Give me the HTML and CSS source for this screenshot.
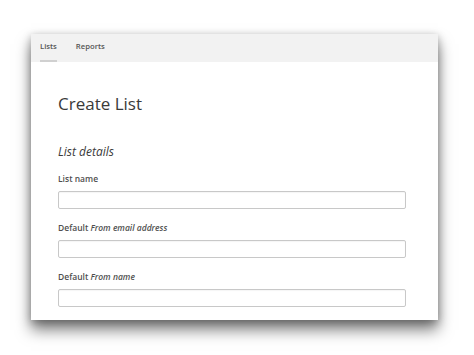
FILE: index.html
```html
<!DOCTYPE html>
<html>
<head>
<meta charset="utf-8">
<link rel="stylesheet" href="styles.css">
</head>
<body>
<div class="card">
  <nav class="tabs">
    <span class="tab active">Lists</span>
    <span class="tab">Reports</span>
  </nav>
  <main class="content">
    <h1 class="title">Create List</h1>
    <h2 class="section">List details</h2>
    <div class="field">
      <label class="label">List name</label>
      <div class="input"></div>
    </div>
    <div class="field">
      <label class="label">Default <em>From email address</em></label>
      <div class="input"></div>
    </div>
    <div class="field">
      <label class="label">Default <em>From name</em></label>
      <div class="input"></div>
    </div>
  </main>
</div>
</body>
</html>
```
FILE: styles.css
```css
html, body {
  margin: 0;
  padding: 0;
  background: #fff;
}
body {
  font-family: "Open Sans", "Noto Sans", sans-serif;
  color: #444;
  padding: 34px 0 0 31px;
  min-height: 355px;
  box-sizing: border-box;
}
.card {
  width: 407px;
  background: #fff;
  box-shadow: 0 10px 14px rgba(0,0,0,0.5), 0 2px 8px rgba(0,0,0,0.28);
}
.tabs {
  height: 28px;
  background: #f2f2f2;
  display: flex;
  gap: 19px;
  padding-left: 9px;
  box-sizing: border-box;
}
.tab {
  font-size: 7.7px;
  font-weight: 600;
  color: #555;
  line-height: 12px;
  padding-top: 6px;
  height: 28px;
  box-sizing: border-box;
}
.tab.active {
  border-bottom: 2px solid #d0d0d0;
}
.content {
  padding: 28px 32px 13px 27px;
}
.title {
  margin: 0;
  font-size: 17px;
  font-weight: 400;
  line-height: 28px;
  color: #3a3a3a;
}
.section {
  margin: 24px 0 10px;
  font-size: 12px;
  font-weight: 400;
  font-style: italic;
  line-height: 20px;
  color: #3a3a3a;
}
.field {
  display: flex;
  flex-direction: column;
  gap: 5px;
}
.field + .field {
  margin-top: 12px;
}
.label {
  font-size: 8.5px;
  font-weight: 600;
  line-height: 14px;
  color: #4f4f4f;
}
.label em {
  font-weight: 600;
}
.input {
  height: 18px;
  box-sizing: border-box;
  border: 1px solid #c8c8c8;
  border-radius: 2px;
  background: #fff;
  box-shadow: inset 0 1px 1px rgba(0,0,0,0.04);
}
```
